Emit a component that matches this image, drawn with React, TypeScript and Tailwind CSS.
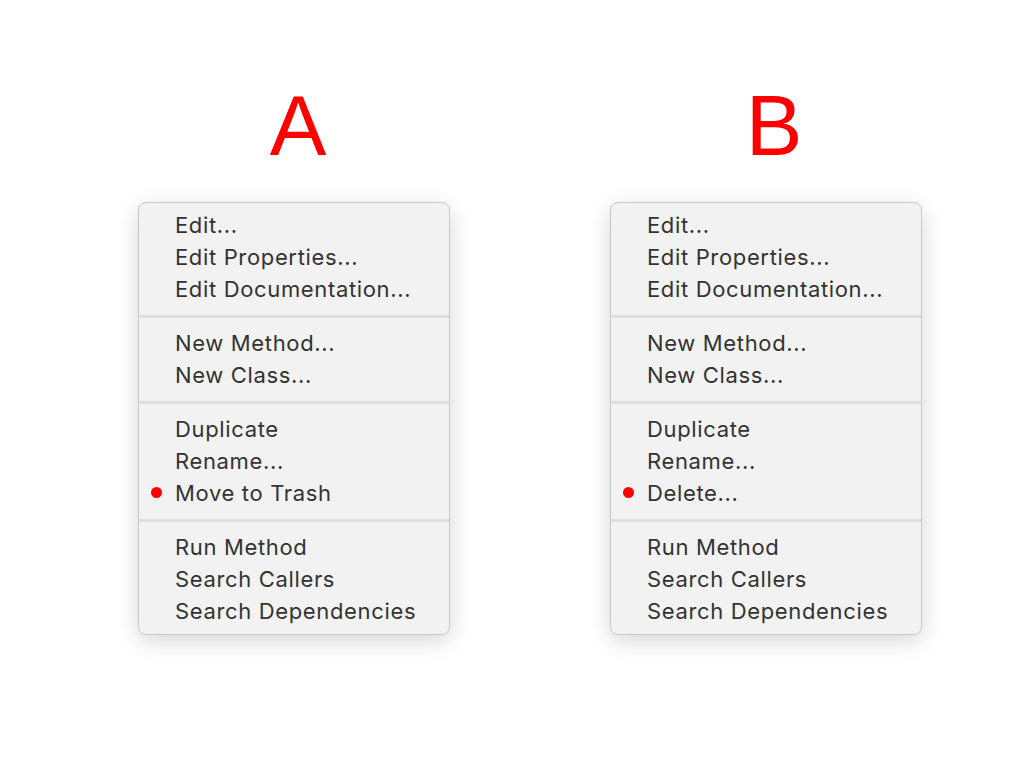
const sections = (deleteLabel: string) => [
  ['Edit...', 'Edit Properties...', 'Edit Documentation...'],
  ['New Method...', 'New Class...'],
  ['Duplicate', 'Rename...', deleteLabel],
  ['Run Method', 'Search Callers', 'Search Dependencies'],
];

function ContextMenu({ deleteLabel }: { deleteLabel: string }) {
  const groups = sections(deleteLabel);
  return (
    <div className="w-[312px] rounded-[8px] border border-[#c9c9c9] bg-[#f2f2f2] pt-[6px] pb-[7px] shadow-[0_6px_22px_rgba(0,0,0,0.16)]">
      {groups.map((items, gi) => (
        <div key={gi}>
          {gi > 0 && <div className="mt-[10px] mb-[9px] h-[3px] bg-[#dfdfdf]" />}
          {items.map((label) => (
            <div
              key={label}
              className="relative h-[32px] pl-[36px] text-[22px] leading-[32px] tracking-[0.65px] text-[#333333] font-['Inter',sans-serif]"
            >
              {label === deleteLabel && (
                <span className="absolute left-[12px] top-[10px] h-[11px] w-[11px] rounded-full bg-[#ff0000]" />
              )}
              {label}
            </div>
          ))}
        </div>
      ))}
    </div>
  );
}

export default function App() {
  return (
    <div className="min-h-[768px] w-[1024px] bg-white pt-[83px] pl-[138px]">
      <div className="flex gap-[160px]">
        <div className="flex w-[312px] flex-col">
          <div className="pl-[8px] text-center font-['Liberation_Sans',Arial,sans-serif] text-[85px] leading-[85px] text-[#ff0000]">
            A
          </div>
          <div className="mt-[34px]">
            <ContextMenu deleteLabel="Move to Trash" />
          </div>
        </div>
        <div className="flex w-[312px] flex-col">
          <div className="pl-[16px] text-center font-['Liberation_Sans',Arial,sans-serif] text-[85px] leading-[85px] text-[#ff0000]">
            B
          </div>
          <div className="mt-[34px]">
            <ContextMenu deleteLabel="Delete..." />
          </div>
        </div>
      </div>
    </div>
  );
}
